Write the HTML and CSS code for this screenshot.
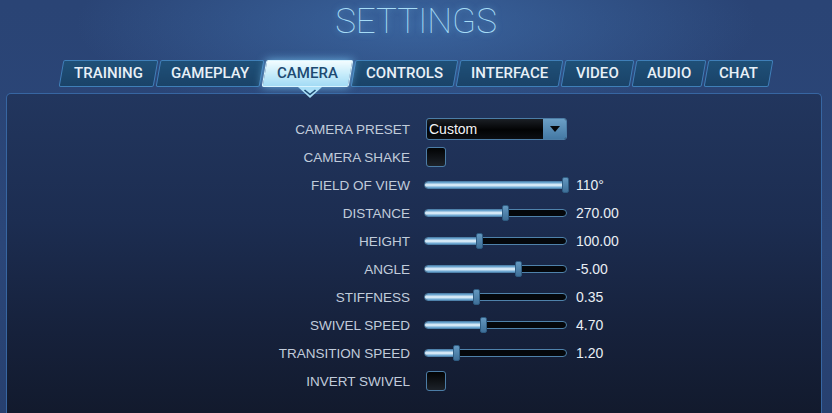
FILE: index.html
```html
<!DOCTYPE html>
<html lang="en">
<head>
    <meta charset="UTF-8">
    <meta name="viewport" content="width=device-width, initial-scale=1.0">
    <title>Settings</title>
    <link rel="stylesheet" href="styles.css">
</head>
<body>
    <h1 class="title">SETTINGS</h1>

    <nav class="tabs">
        <a class="tab"><span>TRAINING</span></a>
        <a class="tab"><span>GAMEPLAY</span></a>
        <a class="tab active"><span>CAMERA
            <svg class="notch" width="24" height="12" viewBox="0 0 24 12">
                <polygon points="0,0 24,0 12,11" fill="#a9def6"/>
                <polyline points="6.5,3 12,7.5 17.5,3" fill="none" stroke="#1d4a72" stroke-width="1.6"/>
            </svg>
        </span></a>
        <a class="tab"><span>CONTROLS</span></a>
        <a class="tab"><span>INTERFACE</span></a>
        <a class="tab"><span>VIDEO</span></a>
        <a class="tab"><span>AUDIO</span></a>
        <a class="tab"><span>CHAT</span></a>
    </nav>

    <div class="panel">
        <div class="row">
            <label>CAMERA PRESET</label>
            <div class="control">
                <div class="select">
                    <span class="select-text">Custom</span>
                    <span class="select-btn"><i class="arrow"></i></span>
                </div>
            </div>
        </div>
        <div class="row">
            <label>CAMERA SHAKE</label>
            <div class="control"><div class="checkbox"></div></div>
        </div>
        <div class="row">
            <label>FIELD OF VIEW</label>
            <div class="control">
                <div class="slider"><div class="fill" style="width: 100%"></div><div class="thumb" style="left: 99%"></div></div>
                <span class="value">110°</span>
            </div>
        </div>
        <div class="row">
            <label>DISTANCE</label>
            <div class="control">
                <div class="slider"><div class="fill" style="width: 57%"></div><div class="thumb" style="left: 57%"></div></div>
                <span class="value">270.00</span>
            </div>
        </div>
        <div class="row">
            <label>HEIGHT</label>
            <div class="control">
                <div class="slider"><div class="fill" style="width: 38%"></div><div class="thumb" style="left: 38%"></div></div>
                <span class="value">100.00</span>
            </div>
        </div>
        <div class="row">
            <label>ANGLE</label>
            <div class="control">
                <div class="slider"><div class="fill" style="width: 66%"></div><div class="thumb" style="left: 66%"></div></div>
                <span class="value">-5.00</span>
            </div>
        </div>
        <div class="row">
            <label>STIFFNESS</label>
            <div class="control">
                <div class="slider"><div class="fill" style="width: 36%"></div><div class="thumb" style="left: 36%"></div></div>
                <span class="value">0.35</span>
            </div>
        </div>
        <div class="row">
            <label>SWIVEL SPEED</label>
            <div class="control">
                <div class="slider"><div class="fill" style="width: 41%"></div><div class="thumb" style="left: 41%"></div></div>
                <span class="value">4.70</span>
            </div>
        </div>
        <div class="row">
            <label>TRANSITION SPEED</label>
            <div class="control">
                <div class="slider"><div class="fill" style="width: 22%"></div><div class="thumb" style="left: 22%"></div></div>
                <span class="value">1.20</span>
            </div>
        </div>
        <div class="row">
            <label>INVERT SWIVEL</label>
            <div class="control"><div class="checkbox"></div></div>
        </div>
    </div>
</body>
</html>
```

FILE: styles.css
```css
body {
    margin: 0;
    height: 413px;
    overflow: hidden;
    display: flex;
    flex-direction: column;
    font-family: 'Liberation Sans', Arial, sans-serif;
    background:
        radial-gradient(ellipse 340px 100px at 50% 24px, rgba(70, 125, 190, 0.55), transparent),
        linear-gradient(#2a4475, #2b4678 60%, #27406f);
}

.title {
    margin: 0;
    padding-top: 4px;
    height: 35px;
    line-height: 36px;
    text-align: center;
    font-family: 'Roboto', sans-serif;
    font-weight: 100;
    font-size: 35px;
    color: #a6dcf6;
    text-shadow: 0 0 6px rgba(120, 200, 250, 0.6);
}

.tabs {
    display: flex;
    justify-content: center;
    gap: 2px;
    margin-top: 21px;
    height: 27px;
}

.tab {
    display: block;
    height: 27px;
    box-sizing: border-box;
    padding: 0 12px;
    transform: skewX(-10deg);
    background: linear-gradient(#1f5078, #1a4368);
    border: 1px solid #3f7fb8;
    border-radius: 2px;
    color: #e8f0f7;
    font-family: 'Roboto', sans-serif;
    font-weight: 500;
    font-size: 15px;
    letter-spacing: 0.05px;
    line-height: 25px;
}

.tab span {
    display: block;
    height: 100%;
    transform: skewX(10deg);
}

.tab.active {
    background: linear-gradient(#f2fcff, #c4ebfa 55%, #a3dbf5);
    border-color: #d8f4ff;
    color: #1d4a72;
    box-shadow: 0 0 9px rgba(130, 210, 255, 0.75);
    z-index: 1;
}

.notch {
    position: absolute;
    left: 50%;
    top: 26px;
    margin-left: -10px;
}

.panel {
    flex: 1;
    margin: 6px 10px 0 6px;
    padding-top: 21px;
    border: 1px solid #3766a2;
    border-bottom: none;
    border-radius: 5px 5px 0 0;
    background: linear-gradient(#22365e, #1c2d51 40%, #16213b 75%, #121a2d);
}

.row {
    display: grid;
    grid-template-columns: 403px auto;
    column-gap: 14px;
    align-items: center;
    height: 28px;
}

.row label {
    text-align: right;
    color: #c1ccdb;
    font-size: 13.5px;
}

.control {
    display: flex;
    align-items: center;
    gap: 9px;
}

.select {
    display: flex;
    width: 141px;
    height: 22px;
    box-sizing: border-box;
    margin-left: 2px;
    border: 1px solid #4c7da6;
    border-radius: 3px;
    overflow: hidden;
    background: linear-gradient(#1b1f25, #020304 55%, #0b0e12);
}

.select-text {
    flex: 1;
    padding-left: 2px;
    color: #f2f4f6;
    font-size: 14px;
    line-height: 20px;
}

.select-btn {
    width: 23px;
    display: flex;
    align-items: center;
    justify-content: center;
    background: linear-gradient(#6b9fc6, #4479a4);
}

.arrow {
    border-left: 5px solid transparent;
    border-right: 5px solid transparent;
    border-top: 6px solid #05080c;
}

.checkbox {
    width: 20px;
    height: 20px;
    box-sizing: border-box;
    margin-left: 2px;
    border: 1px solid #4c7da6;
    border-radius: 3px;
    background: linear-gradient(#020304, #1d2229);
}

.slider {
    position: relative;
    width: 143px;
    height: 8px;
    box-sizing: border-box;
    border: 1px solid #4f82ab;
    border-radius: 4px;
    background: #04070b;
}

.fill {
    height: 100%;
    border-radius: 3px;
    background: linear-gradient(#4f92c4, #eef8ff 50%, #5497c8);
}

.thumb {
    position: absolute;
    top: -5px;
    width: 7px;
    height: 16px;
    margin-left: -3px;
    box-sizing: border-box;
    border: 1px solid #2f5c82;
    border-radius: 2px;
    background: linear-gradient(#6498c0, #3e6f98);
}

.value {
    color: #e9eef4;
    font-size: 14px;
}
```
